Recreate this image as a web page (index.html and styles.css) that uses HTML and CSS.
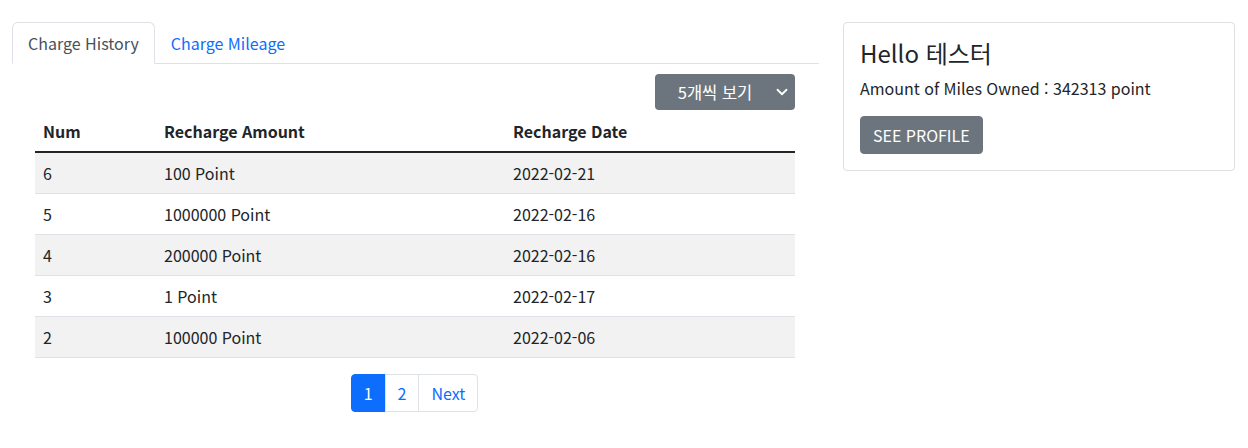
FILE: index.html
```html
<!DOCTYPE html>
<html lang="ko">
<head>
    <meta charset="UTF-8">
    <meta name="viewport" content="width=device-width, initial-scale=1.0">
    <title>Mileage</title>
    <link rel="stylesheet" href="styles.css">
</head>
<body>
    <div class="page">
        <div class="main-col">
            <ul class="tabs">
                <li><a href="#" class="tab active">Charge History</a></li>
                <li><a href="#" class="tab">Charge Mileage</a></li>
            </ul>

            <div class="tab-content">
                <div class="toolbar">
                    <div class="select">
                        <span>5개씩 보기</span>
                        <svg class="chevron" width="12" height="12" viewBox="0 0 16 16">
                            <path d="M2 5l6 6 6-6" fill="none" stroke="#fff" stroke-width="2.4" stroke-linecap="round" stroke-linejoin="round"/>
                        </svg>
                    </div>
                </div>

                <table class="history">
                    <thead>
                        <tr>
                            <th class="c-num">Num</th>
                            <th class="c-amount">Recharge Amount</th>
                            <th>Recharge Date</th>
                        </tr>
                    </thead>
                    <tbody>
                        <tr><td>6</td><td>100 Point</td><td>2022-02-21</td></tr>
                        <tr><td>5</td><td>1000000 Point</td><td>2022-02-16</td></tr>
                        <tr><td>4</td><td>200000 Point</td><td>2022-02-16</td></tr>
                        <tr><td>3</td><td>1 Point</td><td>2022-02-17</td></tr>
                        <tr><td>2</td><td>100000 Point</td><td>2022-02-06</td></tr>
                    </tbody>
                </table>

                <ul class="pagination">
                    <li><a href="#" class="page-link active">1</a></li>
                    <li><a href="#" class="page-link">2</a></li>
                    <li><a href="#" class="page-link">Next</a></li>
                </ul>
            </div>
        </div>

        <div class="side-col">
            <div class="card">
                <h4 class="card-title">Hello 테스터</h4>
                <p class="card-text">Amount of Miles Owned : 342313 point</p>
                <button class="btn">SEE PROFILE</button>
            </div>
        </div>
    </div>
</body>
</html>
```

FILE: styles.css
```css
body {
    margin: 0;
    padding: 0;
    font-family: "Noto Sans CJK KR", "Noto Sans", sans-serif;
    font-size: 16px;
    line-height: 1.5;
    color: #212529;
    background-color: #fff;
}

a {
    text-decoration: none;
}

.page {
    display: grid;
    grid-template-columns: 807px 392px;
    column-gap: 24px;
    padding: 22px 12px 0 12px;
}

/* Tabs */
.tabs {
    display: flex;
    list-style: none;
    margin: 0;
    padding: 0;
    border-bottom: 1px solid #dee2e6;
}

.tab {
    display: block;
    padding: 8px 15px;
    margin-bottom: -1px;
    color: #0d6efd;
    border: 1px solid transparent;
    border-top-left-radius: 6px;
    border-top-right-radius: 6px;
}

.tab.active {
    color: #495057;
    background-color: #fff;
    border-color: #dee2e6 #dee2e6 #fff;
}

.tab-content {
    padding: 10px 24px 0 23px;
}

.toolbar {
    display: flex;
    justify-content: flex-end;
    margin-bottom: 1px;
}

.select {
    display: flex;
    align-items: center;
    width: 140px;
    height: 36px;
    box-sizing: border-box;
    padding: 0 7px 0 0;
    background-color: #6c757d;
    color: #fff;
    border-radius: 4px;
}

.select span {
    width: 120px;
    text-align: center;
    font-size: 16.5px;
}

.chevron {
    margin-left: auto;
}

/* Table */
.history {
    width: 100%;
    border-collapse: collapse;
}

.history th,
.history td {
    padding: 8px;
    text-align: left;
    border-bottom: 1px solid #dee2e6;
    vertical-align: middle;
}

.history th {
    font-weight: bold;
    border-bottom: 2px solid #212529;
}

.history td {
    height: 24px;
}

.c-num {
    width: 105px;
}

.c-amount {
    width: 333px;
}

.history tbody tr:nth-child(odd) td {
    background-color: #f2f2f2;
}

/* Pagination */
.pagination {
    display: flex;
    justify-content: center;
    list-style: none;
    margin: 16px 0 0 0;
    padding: 0;
}

.page-link {
    display: block;
    padding: 6px 12px;
    color: #0d6efd;
    border: 1px solid #dee2e6;
    margin-left: -1px;
    line-height: 1.5;
}

.pagination li:first-child .page-link {
    border-top-left-radius: 4px;
    border-bottom-left-radius: 4px;
}

.pagination li:last-child .page-link {
    border-top-right-radius: 4px;
    border-bottom-right-radius: 4px;
}

.page-link.active {
    background-color: #0d6efd;
    border-color: #0d6efd;
    color: #fff;
}

/* Card */
.card {
    border: 1px solid rgba(0, 0, 0, 0.125);
    border-radius: 4px;
    padding: 16px;
}

.card-title {
    margin: 0 0 8px 0;
    font-size: 24px;
    font-weight: 400;
    line-height: 1.2;
}

.card-text {
    margin: 0 0 16px 0;
}

.btn {
    font-family: inherit;
    font-size: 16px;
    line-height: 1.5;
    padding: 6px 12px;
    border: 1px solid #6c757d;
    border-radius: 4px;
    background-color: #6c757d;
    color: #fff;
    cursor: pointer;
}
```
